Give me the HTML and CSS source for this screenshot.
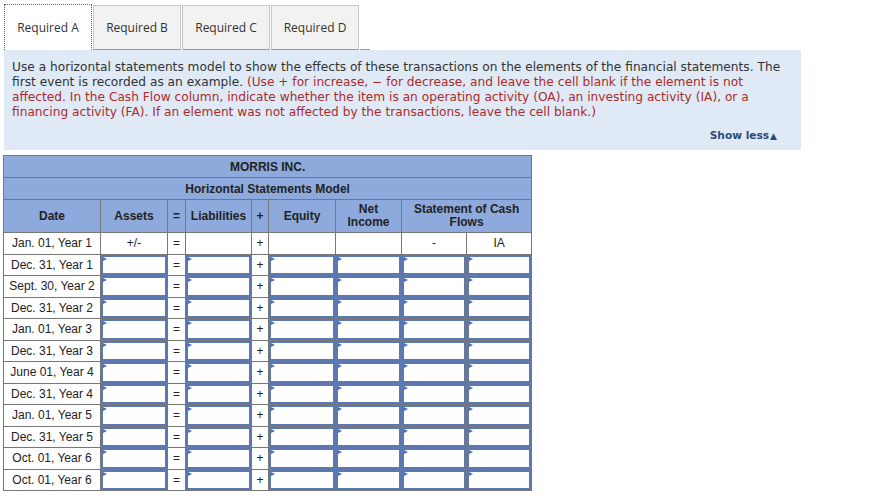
FILE: index.html
```html
<!DOCTYPE html>
<html>
<head>
<meta charset="utf-8">
<link rel="stylesheet" href="styles.css">
</head>
<body>
<div class="page">
  <div class="tabs">
    <div class="tab active">Required A</div>
    <div class="tab">Required B</div>
    <div class="tab">Required C</div>
    <div class="tab">Required D</div>
    <div class="tab-fill"></div>
  </div>
  <div class="panel">
    <p class="instr">Use a horizontal statements model to show the effects of these transactions on the elements of the financial statements. The first event is recorded as an example. <span class="red">(Use + for increase, &minus; for decrease, and leave the cell blank if the element is not affected. In the Cash Flow column, indicate whether the item is an operating activity (OA), an investing activity (IA), or a financing activity (FA). If an element was not affected by the transactions, leave the cell blank.)</span></p>
    <div class="showless">Show less<span class="tri">&#9650;</span></div>
  </div>
  <table class="model">
    <colgroup>
      <col class="c-date"><col class="c-val"><col class="c-op"><col class="c-val2"><col class="c-op2"><col class="c-val"><col class="c-val2"><col class="c-cf"><col class="c-cf">
    </colgroup>
    <tr class="title"><th colspan="9">MORRIS INC.</th></tr>
    <tr class="title sub"><th colspan="9">Horizontal Statements Model</th></tr>
    <tr class="head">
      <th>Date</th><th>Assets</th><th>=</th><th>Liabilities</th><th>+</th><th>Equity</th><th>Net<br>Income</th><th colspan="2">Statement of Cash<br>Flows</th>
    </tr>
    <tr class="row">
      <td class="date">Jan. 01, Year 1</td><td>+/-</td><td class="op">=</td><td></td><td class="op">+</td><td></td><td></td><td>-</td><td>IA</td>
    </tr>
    <tr class="row"><td class="date">Dec. 31, Year 1</td><td class="in"><div class="box"></div></td><td class="op">=</td><td class="in"><div class="box"></div></td><td class="op">+</td><td class="in"><div class="box"></div></td><td class="in"><div class="box"></div></td><td class="in"><div class="box"></div></td><td class="in"><div class="box"></div></td></tr>
    <tr class="row"><td class="date">Sept. 30, Year 2</td><td class="in"><div class="box"></div></td><td class="op">=</td><td class="in"><div class="box"></div></td><td class="op">+</td><td class="in"><div class="box"></div></td><td class="in"><div class="box"></div></td><td class="in"><div class="box"></div></td><td class="in"><div class="box"></div></td></tr>
    <tr class="row"><td class="date">Dec. 31, Year 2</td><td class="in"><div class="box"></div></td><td class="op">=</td><td class="in"><div class="box"></div></td><td class="op">+</td><td class="in"><div class="box"></div></td><td class="in"><div class="box"></div></td><td class="in"><div class="box"></div></td><td class="in"><div class="box"></div></td></tr>
    <tr class="row"><td class="date">Jan. 01, Year 3</td><td class="in"><div class="box"></div></td><td class="op">=</td><td class="in"><div class="box"></div></td><td class="op">+</td><td class="in"><div class="box"></div></td><td class="in"><div class="box"></div></td><td class="in"><div class="box"></div></td><td class="in"><div class="box"></div></td></tr>
    <tr class="row"><td class="date">Dec. 31, Year 3</td><td class="in"><div class="box"></div></td><td class="op">=</td><td class="in"><div class="box"></div></td><td class="op">+</td><td class="in"><div class="box"></div></td><td class="in"><div class="box"></div></td><td class="in"><div class="box"></div></td><td class="in"><div class="box"></div></td></tr>
    <tr class="row"><td class="date">June 01, Year 4</td><td class="in"><div class="box"></div></td><td class="op">=</td><td class="in"><div class="box"></div></td><td class="op">+</td><td class="in"><div class="box"></div></td><td class="in"><div class="box"></div></td><td class="in"><div class="box"></div></td><td class="in"><div class="box"></div></td></tr>
    <tr class="row"><td class="date">Dec. 31, Year 4</td><td class="in"><div class="box"></div></td><td class="op">=</td><td class="in"><div class="box"></div></td><td class="op">+</td><td class="in"><div class="box"></div></td><td class="in"><div class="box"></div></td><td class="in"><div class="box"></div></td><td class="in"><div class="box"></div></td></tr>
    <tr class="row"><td class="date">Jan. 01, Year 5</td><td class="in"><div class="box"></div></td><td class="op">=</td><td class="in"><div class="box"></div></td><td class="op">+</td><td class="in"><div class="box"></div></td><td class="in"><div class="box"></div></td><td class="in"><div class="box"></div></td><td class="in"><div class="box"></div></td></tr>
    <tr class="row"><td class="date">Dec. 31, Year 5</td><td class="in"><div class="box"></div></td><td class="op">=</td><td class="in"><div class="box"></div></td><td class="op">+</td><td class="in"><div class="box"></div></td><td class="in"><div class="box"></div></td><td class="in"><div class="box"></div></td><td class="in"><div class="box"></div></td></tr>
    <tr class="row"><td class="date">Oct. 01, Year 6</td><td class="in"><div class="box"></div></td><td class="op">=</td><td class="in"><div class="box"></div></td><td class="op">+</td><td class="in"><div class="box"></div></td><td class="in"><div class="box"></div></td><td class="in"><div class="box"></div></td><td class="in"><div class="box"></div></td></tr>
    <tr class="row"><td class="date">Oct. 01, Year 6</td><td class="in"><div class="box"></div></td><td class="op">=</td><td class="in"><div class="box"></div></td><td class="op">+</td><td class="in"><div class="box"></div></td><td class="in"><div class="box"></div></td><td class="in"><div class="box"></div></td><td class="in"><div class="box"></div></td></tr>
  </table>
</div>
</body>
</html>
```
FILE: styles.css
```css
html, body {
  margin: 0;
  padding: 0;
  background: #fff;
}
.page {
  padding: 4px 0 0 4px;
}
.tabs {
  display: flex;
  align-items: flex-end;
  width: 366px;
  height: 46px;
  font-family: "Open Sans", "DejaVu Sans", sans-serif;
  font-size: 12px;
  color: #333;
}
.tab {
  box-sizing: border-box;
  width: 88px;
  height: 45px;
  margin-right: 1px;
  background: #f2f2f2;
  border: 1px solid #c8c8c8;
  border-bottom: 1px solid #999;
  display: flex;
  align-items: center;
  justify-content: center;
  padding-bottom: 1px;
}
.tab.active {
  height: 46px;
  background: #fff;
  border: 1px dotted #4a6aa8;
  border-bottom: none;
}
.tab-fill {
  flex: 1;
  height: 1px;
  background: #999;
}
.panel {
  width: 797px;
  box-sizing: border-box;
  background: #dfeaf6;
  padding: 10px 14px 6px 8px;
  font-family: "DejaVu Sans", Verdana, sans-serif;
  font-size: 12.2px;
  line-height: 15px;
  color: #333;
}
.instr {
  margin: 0;
}
.red {
  color: #ac2b2b;
}
.showless {
  text-align: right;
  margin-top: 8px;
  padding-right: 10px;
  font-size: 10.6px;
  font-weight: bold;
  color: #2d4a7c;
}
.showless .tri {
  font-size: 9px;
  margin-left: 1px;
}
.model {
  margin-top: 5px;
  margin-left: -1px;
  border-collapse: collapse;
  table-layout: fixed;
  width: 529px;
  font-family: "Liberation Sans", Arial, sans-serif;
  font-size: 12px;
  color: #222;
}
.c-date { width: 97px; }
.c-val { width: 67px; }
.c-val2 { width: 66px; }
.c-op { width: 18px; }
.c-op2 { width: 17px; }
.c-cf { width: 65px; }
.model th, .model td {
  border: 1px solid #777;
  padding: 0;
  text-align: center;
}
.model th {
  background: #8eaadc;
  font-weight: bold;
  color: #222;
}
.title th {
  height: 21px;
}
.head th {
  height: 32px;
  line-height: 13px;
}
.row td {
  height: 20.5px;
  background: #fff;
}
.row td.date {
  text-align: center;
}
.row td.in {
  padding: 0;
  position: relative;
}
.box {
  box-sizing: border-box;
  height: 20.5px;
  border: 2px solid #5b78b1;
  position: relative;
}
.box::before {
  content: "";
  position: absolute;
  left: 0;
  top: 0;
  width: 0;
  height: 0;
  border-top: 2.5px solid transparent;
  border-bottom: 2.5px solid transparent;
  border-left: 4px solid #4a6fc0;
}
```
